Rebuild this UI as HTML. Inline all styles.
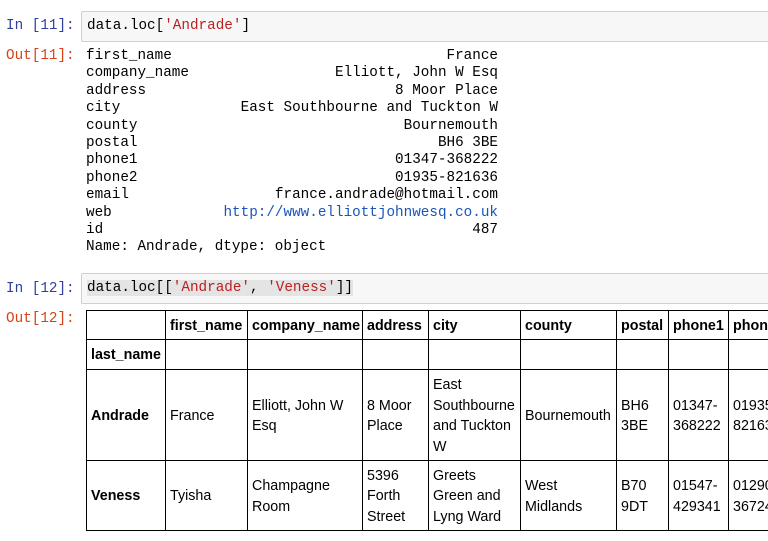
<!DOCTYPE html>
<html><head><style>
body{margin:0;width:768px;height:541px;overflow:hidden;background:#fff;position:relative;font-family:"Liberation Sans",sans-serif}
.m{font-family:"Liberation Mono",monospace;font-size:14.3px;position:absolute;white-space:pre}
.pin{color:#303f9f}.pout{color:#d84315}
.box{position:absolute;left:81px;width:700px;background:#f7f7f7;border:1px solid #cfcfcf;border-radius:2px}
.s{color:#ba2121}
table{position:absolute;left:86px;top:310px;width:722px;border-collapse:collapse;font-size:14.3px;color:#000;table-layout:fixed}
td,th{border:1px solid #000;padding:0 4px;line-height:20.5px;text-align:left;vertical-align:middle;overflow:hidden;white-space:normal}
th{font-weight:bold;padding-top:2px}
td{padding-top:2px}
.v{position:absolute;left:86px;width:412px;top:48px;font-family:"Liberation Mono",monospace;font-size:14.3px;line-height:17.4px;color:#000}
.v div{display:flex;justify-content:space-between;white-space:pre}
</style></head><body>
<div class="m pin" style="left:6px;top:18px">In [11]:</div>
<div class="box" style="top:11px;height:29px"></div>
<div class="m" style="left:87px;top:18px">data.loc[<span class="s">'Andrade'</span>]</div>
<div class="m pout" style="left:6px;top:48px">Out[11]:</div>
<div class="v">
<div><span>first_name</span><span>France</span></div>
<div><span>company_name</span><span>Elliott, John W Esq</span></div>
<div><span>address</span><span>8 Moor Place</span></div>
<div><span>city</span><span>East Southbourne and Tuckton W</span></div>
<div><span>county</span><span>Bournemouth</span></div>
<div><span>postal</span><span>BH6 3BE</span></div>
<div><span>phone1</span><span>01347-368222</span></div>
<div><span>phone2</span><span>01935-821636</span></div>
<div><span>email</span><span>france.andrade@hotmail.com</span></div>
<div><span>web</span><span style="color:#1a55b8">http://www.elliottjohnwesq.co.uk</span></div>
<div><span>id</span><span>487</span></div>
<div><span>Name: Andrade, dtype: object</span></div>
</div>
<div class="m pin" style="left:6px;top:281px">In [12]:</div>
<div class="box" style="top:273px;height:29px"></div>
<div class="m" style="left:87px;top:280px;background:#e4e4e4">data.loc[[<span class="s">'Andrade'</span>, <span class="s">'Veness'</span>]]</div>
<div class="m pout" style="left:6px;top:311px">Out[12]:</div>
<table>
<colgroup><col style="width:79px"><col style="width:82px"><col style="width:115px"><col style="width:66px"><col style="width:92px"><col style="width:96px"><col style="width:52px"><col style="width:60px"><col style="width:80px"></colgroup>
<tr style="height:29px"><th></th><th>first_name</th><th>company_name</th><th>address</th><th>city</th><th>county</th><th>postal</th><th>phone1</th><th>phone2</th></tr>
<tr style="height:30px"><th>last_name</th><td></td><td></td><td></td><td></td><td></td><td></td><td></td><td></td></tr>
<tr style="height:91px"><th>Andrade</th><td>France</td><td>Elliott, John W Esq</td><td>8 Moor Place</td><td>East Southbourne and Tuckton W</td><td>Bournemouth</td><td>BH6 3BE</td><td>01347-368222</td><td>01935-821636</td></tr>
<tr style="height:70px"><th>Veness</th><td>Tyisha</td><td>Champagne Room</td><td>5396 Forth Street</td><td>Greets Green and Lyng Ward</td><td>West Midlands</td><td>B70 9DT</td><td>01547-429341</td><td>01290-367248</td></tr>
</table>
</body></html>
